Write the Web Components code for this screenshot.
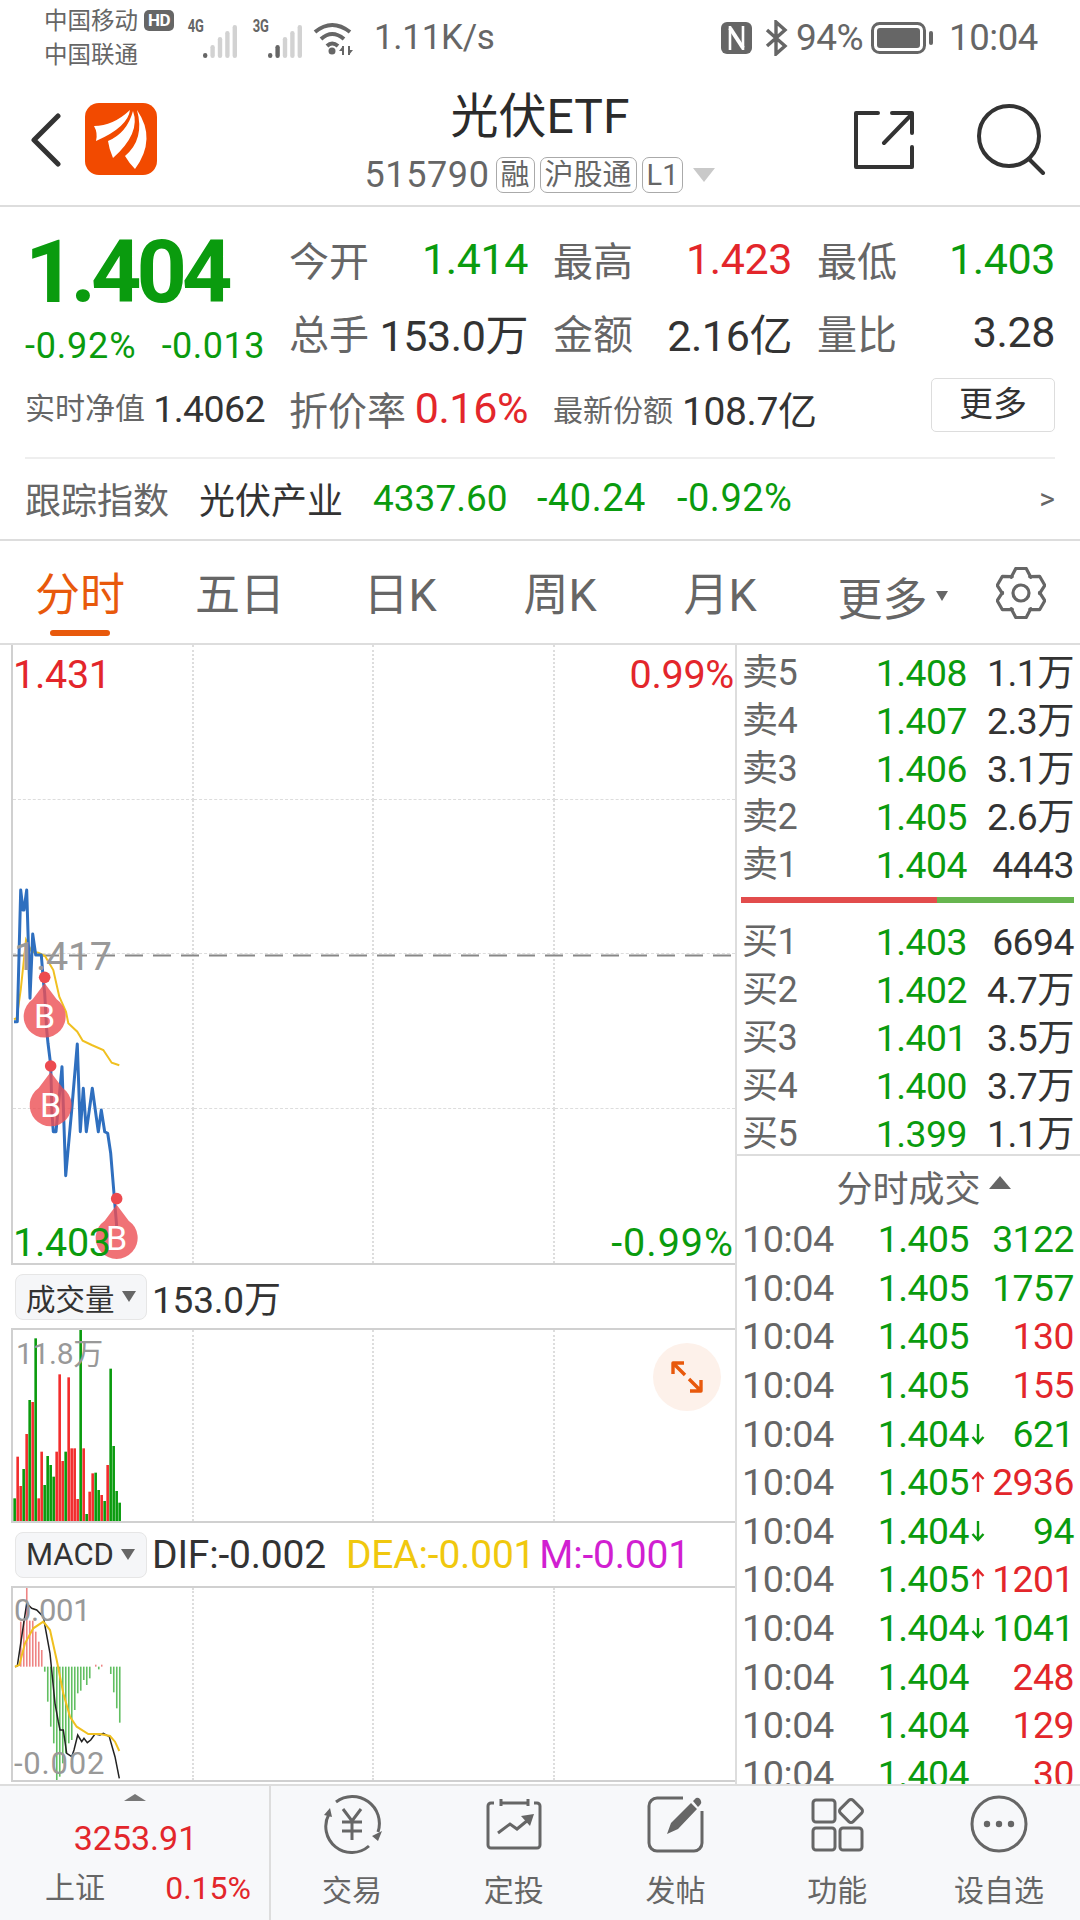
<!DOCTYPE html>
<html lang="zh">
<head>
<meta charset="utf-8">
<title>光伏ETF</title>
<style>
    html, body { margin: 0; padding: 0; background: #fff; }
    body {
        width: 1080px;
        height: 1920px;
        overflow: hidden;
        display: flex;
        flex-direction: column;
        font-family: Roboto, "Noto Sans CJK SC", sans-serif;
        color: #333;
    }
</style>
</head>
<body>
<status-bar></status-bar>
<stock-header></stock-header>
<quote-panel></quote-panel>
<period-tabs></period-tabs>
<market-area>
    <chart-panel></chart-panel>
    <depth-panel></depth-panel>
</market-area>
<nav-bar>
    <index-ticker></index-ticker>
    <nav-item label="交易">
        <svg width="60" height="60" viewBox="0 0 60 60" fill="none" stroke="#666" stroke-width="3">
            <path d="M7 20A26 26 0 0 0 47 52M14 8A27 27 0 0 1 56 38"/>
            <path d="M2 21L8 14L10 23Z M50 42L56 47L60 37Z" fill="#666" stroke="none"/>
            <path d="M21 15L30 27L39 15M30 27V46M20 28H40M20 37H40"/>
        </svg>
    </nav-item>
    <nav-item label="定投">
        <svg width="60" height="60" viewBox="0 0 60 60" fill="none" stroke="#666" stroke-width="3">
            <path d="M10 9H7a3 3 0 0 0-3 3V51a3 3 0 0 0 3 3H53a3 3 0 0 0 3-3V12a3 3 0 0 0-3-3H50M17 5V12M44 5V12M17 9H44"/>
            <path d="M14 39L26 30L33 35L44 26"/>
            <path d="M37 22L50 20L46 32Z" fill="#666" stroke="none"/>
        </svg>
    </nav-item>
    <nav-item label="发帖">
        <svg width="60" height="60" viewBox="0 0 60 60" fill="none" stroke="#666" stroke-width="3">
            <path d="M38 4H12a8 8 0 0 0-8 8V49a8 8 0 0 0 8 8H49a8 8 0 0 0 8-8V17"/>
            <path d="M22 40L26 29L46 9L52 15L33 35Z M48 7L51 4Q53 3 55 5L56 7Q57 9 55 11L53 13Z" fill="#666" stroke="none"/>
        </svg>
    </nav-item>
    <nav-item label="功能">
        <svg width="60" height="60" viewBox="0 0 60 60" fill="none" stroke="#666" stroke-width="3">
            <rect x="6" y="6" width="22" height="22" rx="3"/>
            <rect x="6" y="34" width="22" height="22" rx="3"/>
            <rect x="33" y="34" width="22" height="22" rx="3"/>
            <rect x="35" y="8" width="18" height="18" rx="3" transform="rotate(45 44 17)"/>
        </svg>
    </nav-item>
    <nav-item label="设自选">
        <svg width="60" height="60" viewBox="0 0 60 60" fill="none" stroke="#666" stroke-width="3">
            <circle cx="30" cy="30" r="27"/>
            <g fill="#666" stroke="none"><circle cx="18" cy="30" r="3.2"/><circle cx="30" cy="30" r="3.2"/><circle cx="42" cy="30" r="3.2"/></g>
        </svg>
    </nav-item>
</nav-bar>

<script>
const GREEN = '#0a9b0e';
const RED = '#e3262b';

class StatusBar extends HTMLElement {
    constructor() {
        super();
        const bars = (dark) => [0, 1, 2, 3, 4].map(i => {
            const h = [5, 13, 21, 27, 33][i];
            const fill = i <= dark ? '#666' : '#d2d2d2';
            return `<rect x="${i * 7.4}" y="${34 - h}" width="4.4" height="${h}" rx="2.2" fill="${fill}"/>`;
        }).join('');
        this.attachShadow({ mode: 'open' }).innerHTML = `
            <style>
                :host { display: flex; align-items: center; height: 75px; padding: 0 42px 0 44px; box-sizing: border-box; color: #666; flex: none; }
                .carriers { width: 100px; font-size: 23.5px; line-height: 34px; white-space: nowrap; }
                .hd { width: 30px; height: 21px; margin: -34px 0 0 0; background: #666; color: #fff; border-radius: 5px; font: 700 17px/21px Roboto, sans-serif; text-align: center; letter-spacing: -.5px; }
                .net { font: 700 18px/18px Roboto, sans-serif; transform: scaleX(.72); width: 19px; margin: -24px -1px 0 0; }
                .speed { font-size: 35px; letter-spacing: -.3px; margin-left: 19px; }
                .right { margin-left: auto; display: flex; align-items: center; }
                .pct { font-size: 37px; margin: 0 8px 0 7px; letter-spacing: -.5px; }
                .time { font-size: 36.5px; margin-left: 14px; letter-spacing: -.4px; }
                svg { display: block; }
            </style>
            <div class="carriers">中国移动<br>中国联通</div>
            <div class="hd">HD</div>
            <div class="net" style="margin-left:11px">4G</div>
            <svg width="34" height="34" viewBox="0 0 34 34" style="margin-top:6px">${bars(0)}</svg>
            <div class="net" style="margin-left:13px">3G</div>
            <svg width="34" height="34" viewBox="0 0 34 34" style="margin-top:6px">${bars(1)}</svg>
            <svg width="42" height="34" viewBox="0 0 42 34" fill="none" stroke="#666" stroke-width="4" style="margin-left:11px">
                <path d="M2 11Q19 -3 37 11M8 18Q19 8 31 18M14 25Q19 20 25 25"/>
                <circle cx="19" cy="30" r="3.5" fill="#666" stroke="none"/>
                <path d="M30 25V34M36 25V34" stroke-width="2"/>
                <path d="M26 30L30 25L30 30ZM40 29L36 34L36 29Z" fill="#666" stroke="none"/>
            </svg>
            <div class="speed">1.11K/s</div>
            <div class="right">
                <svg width="31" height="32" viewBox="0 0 31 32">
                    <rect width="31" height="32" rx="6" fill="#666"/>
                    <path d="M9 4V28M22 4V28" stroke="#fff" stroke-width="2.6" fill="none"/>
                    <path d="M9 6L22 26" stroke="#fff" stroke-width="4" fill="none"/>
                </svg>
                <svg width="24" height="36" viewBox="0 0 24 36" fill="none" stroke="#666" stroke-width="3.4" style="margin-left:13px">
                    <path d="M2 10L20 26L11 34V2L20 10L2 26"/>
                </svg>
                <div class="pct">94%</div>
                <svg width="64" height="32" viewBox="0 0 64 32">
                    <rect x="1.5" y="1.5" width="52" height="29" rx="7" fill="none" stroke="#666" stroke-width="3"/>
                    <rect x="6" y="6" width="43" height="20" rx="3" fill="#666"/>
                    <rect x="58" y="9" width="4" height="14" rx="2" fill="#666"/>
                </svg>
                <div class="time">10:04</div>
            </div>`;
    }
}

class StockHeader extends HTMLElement {
    constructor() {
        super();
        this.attachShadow({ mode: 'open' }).innerHTML = `
            <style>
                :host { display: flex; align-items: flex-start; height: 132px; box-sizing: border-box; border-bottom: 2px solid #ddd; padding: 28px 31px 0 31px; flex: none; }
                .logo { margin: 0 0 0 24px; }
                .mid { flex: 1; text-align: center; padding-left: 69px; }
                .name { font-size: 48px; line-height: 50px; margin-top: -11px; color: #2b2b2b; }
                .sub { display: flex; align-items: center; justify-content: center; color: #666; margin-top: 14px; height: 38px; }
                .code { font-size: 36px; letter-spacing: .6px; margin-right: 1px; }
                .tag { border: 1.5px solid #aaa; border-radius: 7px; font-size: 29px; line-height: 34px; padding: 0 4px; margin-left: 5px; color: #666; }
                .tri { width: 0; height: 0; border: 11px solid transparent; border-top: 14px solid #c9c9c9; border-bottom: 0; margin-left: 10px; }
                svg { display: block; }
            </style>
            <svg width="30" height="54" viewBox="0 0 30 54" fill="none" stroke="#333" stroke-width="5" stroke-linecap="round" stroke-linejoin="round" style="margin-top:10px"><path d="M27 3L3 27L27 51"/></svg>
            <svg class="logo" width="72" height="72" viewBox="0 0 72 72">
                <rect width="72" height="72" rx="14" fill="#f24a00"/>
                <path d="M9 23Q28 23 45 7Q43 24 11 38Q13 30 9 23Z" fill="#fff"/>
                <path d="M48 8Q56 30 28 55Q24 46 23 38Q42 30 48 8Z" fill="#fff"/>
                <path d="M52 7Q72 36 50 66Q44 60 40 53Q60 36 52 7Z" fill="#fff"/>
            </svg>
            <div class="mid">
                <div class="name">光伏ETF</div>
                <div class="sub">
                    <span class="code">515790</span><span class="tag">融</span><span class="tag">沪股通</span><span class="tag">L1</span><span class="tri"></span>
                </div>
            </div>
            <svg width="60" height="60" viewBox="0 0 60 60" fill="none" stroke="#333" stroke-width="4" stroke-linecap="round" stroke-linejoin="round" style="margin:6px 0 0 0">
                <path d="M24 4H2V58H58V38M30 34L58 5M38 4H58V24"/>
            </svg>
            <svg width="76" height="72" viewBox="0 0 76 72" fill="none" stroke="#333" stroke-width="4" style="margin:0 0 0 59px">
                <circle cx="36" cy="33" r="30"/><path d="M56 56L70 70" stroke-linecap="round"/>
            </svg>`;
    }
}

class QuotePanel extends HTMLElement {
    constructor() {
        super();
        this.attachShadow({ mode: 'open' }).innerHTML = `
            <style>
                :host { display: block; height: 334px; box-sizing: border-box; border-bottom: 2px solid #ddd; padding: 0 25px; flex: none; font-size: 40px; }
                .top { display: grid; grid-template-columns: 239px 239px 238px; align-content: start; column-gap: 25px; padding-left: 264px; position: relative; height: 250px; box-sizing: border-box; }
                .left { position: absolute; left: 0; top: 0; width: 240px; }
                .big { font-size: 88px; font-weight: 700; letter-spacing: -5px; line-height: 90px; color: ${GREEN}; margin: 20px 0 0 0; height: 92px; }
                .chg { display: flex; justify-content: space-between; font-size: 36px; line-height: 40px; color: ${GREEN}; margin-top: 7px; }
                .nav { display: flex; justify-content: space-between; align-items: center; line-height: 44px; margin-top: 21px; }
                .nav b { font-weight: 400; font-size: 30px; color: #666; }
                .nav span { font-size: 37.5px; letter-spacing: -.6px; }
                .cell { display: flex; justify-content: space-between; align-items: center; height: 60px; margin-top: 13px; }
                .cell:nth-child(-n+4) { margin-top: 22px; }
                .l { color: #666; }
                .v { font-size: 43px; letter-spacing: -.4px; color: #333; }
                .g { color: ${GREEN}; }
                .r { color: ${RED}; }
                .row3 { grid-column: 1 / 4; display: flex; align-items: center; height: 60px; margin-top: 16px; }
                .row3 .small { font-size: 30px; color: #666; }
                .btn { margin: -7px 0 0 auto; width: 124px; height: 54px; box-sizing: border-box; border: 1.5px solid #ddd; border-radius: 5px; font-size: 34px; line-height: 50px; text-align: center; color: #333; }
                .idx { display: flex; align-items: center; border-top: 2px solid #eee; height: 80px; font-size: 36px; margin-top: 0; box-sizing: border-box; }
            </style>
            <div class="top">
                <div class="left">
                    <div class="big">1.404</div>
                    <div class="chg"><span style="letter-spacing:.8px">-0.92%</span><span style="letter-spacing:.5px">-0.013</span></div>
                    <div class="nav"><b>实时净值</b><span>1.4062</span></div>
                </div>
                <div class="cell"><span class="l">今开</span><span class="v g">1.414</span></div>
                <div class="cell"><span class="l">最高</span><span class="v r">1.423</span></div>
                <div class="cell"><span class="l">最低</span><span class="v g">1.403</span></div>
                <div class="cell"><span class="l">总手</span><span class="v">153.0万</span></div>
                <div class="cell"><span class="l">金额</span><span class="v">2.16亿</span></div>
                <div class="cell"><span class="l">量比</span><span class="v">3.28</span></div>
                <div class="row3">
                    <span class="l" style="font-size:39px;width:124px;flex:none">折价率</span><span class="v r" style="width:115px;text-align:right;flex:none">0.16%</span>
                    <span class="small" style="margin-left:25px;width:129px;flex:none">最新份额</span><span class="v" style="font-size:39px">108.7亿</span>
                    <span class="btn">更多</span>
                </div>
            </div>
            <div class="idx">
                <span class="l" style="width:174px">跟踪指数</span>
                <span style="width:174px">光伏产业</span>
                <span class="g" style="width:164px;font-size:37px">4337.60</span>
                <span class="g" style="width:140px;font-size:38px;letter-spacing:.5px">-40.24</span>
                <span class="g" style="font-size:38px;letter-spacing:.5px">-0.92%</span>
                <span class="l" style="margin-left:auto;font-size:30px">&gt;</span>
            </div>`;
    }
}

class PeriodTabs extends HTMLElement {
    constructor() {
        super();
        const names = ['分时', '五日', '日K', '周K', '月K'];
        const gear = [];
        for (let i = 0; i < 6; i++) {
            const a = -90 + i * 60;
            [[-32, 18.5], [-12, 25], [12, 25], [32, 18.5]].forEach(([d, r]) => {
                const t = (a + d) * Math.PI / 180;
                gear.push(`${(25 + r * Math.cos(t)).toFixed(1)},${(26 + r * Math.sin(t)).toFixed(1)}`);
            });
        }
        this.attachShadow({ mode: 'open' }).innerHTML = `
            <style>
                :host { display: flex; height: 102px; flex: none; box-sizing: border-box; position: relative; font-size: 45px; color: #666; }
                .tab { width: 160px; text-align: center; line-height: 110px; flex: none; position: relative; }
                .on { color: #e8590c; }
                .on::after { content: ""; position: absolute; left: 50px; width: 60px; height: 6px; top: 89px; border-radius: 3px; background: #e8590c; }
                .more { display: flex; align-items: center; justify-content: center; width: 161px; height: 110px; flex: none; margin-left: 12px; }
                .tri { width: 0; height: 0; border: 6px solid transparent; border-top: 10px solid #666; border-bottom: 0; margin-left: 8px; }
                svg { margin: 26px 0 0 23px; flex: none; }
            </style>
            ${names.map((n, i) => `<div class="tab${i === 0 ? ' on' : ''}">${n}</div>`).join('')}
            <div class="more"><span>更多</span><span class="tri"></span></div>
            <svg width="50" height="52" viewBox="0 0 50 52" fill="none" stroke="#666" stroke-width="3.2" stroke-linejoin="round">
                <polygon points="${gear.join(' ')}"/>
                <circle cx="25" cy="26" r="8"/>
            </svg>`;
    }
}

class MarketArea extends HTMLElement {
    constructor() {
        super();
        this.attachShadow({ mode: 'open' }).innerHTML = `
            <style>
                :host { display: flex; height: 1141px; flex: none; overflow: hidden; border-top: 2px solid #ddd; box-sizing: border-box; }
            </style>
            <slot></slot>`;
    }
}

class ChartBox extends HTMLElement {
    constructor() {
        super();
        const rows = +(this.getAttribute('rows') || 1);
        const cells = Array(rows * 4).fill(0).map((_, i) => {
            const right = i % 4 < 3 ? 'border-right:2px dotted #ddd;' : '';
            const bottom = i < (rows - 1) * 4 && rows > 1 ? 'border-bottom:1px dashed #ddd;' : '';
            return `<i style="${right}${bottom}"></i>`;
        }).join('');
        this.attachShadow({ mode: 'open' }).innerHTML = `
            <style>
                :host { display: block; position: relative; box-sizing: border-box; border: 2px solid #d0d0d0; border-right: 0; overflow: hidden; flex: none; }
                .grid { position: absolute; inset: 0; display: grid; grid-template-columns: repeat(4, 1fr); grid-template-rows: repeat(${rows}, 1fr); }
            </style>
            <div class="grid">${cells}</div>
            <slot></slot>`;
    }
}

// points are read off the reference at 3x, so x/3 is the page x and y/3 is relative to the crop
const toPts = (arr, cropY, boxTop) => arr.map(([x, y]) => `${(x / 3 - 13).toFixed(1)},${(cropY + y / 3 - boxTop).toFixed(1)}`).join(' ');

class ChartPanel extends HTMLElement {
    constructor() {
        super();
        this.attachShadow({ mode: 'open' }).innerHTML = `
            <style>
                :host { display: flex; flex-direction: column; width: 735px; padding-left: 11px; box-sizing: border-box; flex: none; }
                svg.plot { position: absolute; left: 0; top: 0; }
                .lb { position: absolute; line-height: 40px; height: 40px; font-size: 39.5px; letter-spacing: -.3px; white-space: nowrap; }
                .g { color: ${GREEN}; }
                .r { color: ${RED}; }
                .gray { color: #999; font-size: 31px; }
                .head { display: flex; align-items: center; height: 63px; flex: none; padding-left: 4px; font-size: 39px; letter-spacing: -.2px; }
                .pill { display: flex; align-items: center; box-sizing: border-box; width: 132px; height: 46px; background: #f5f6f8; border: 1.5px solid #e6e6e6; border-radius: 8px; font-size: 29.5px; padding-left: 10px; margin-right: 5px; color: #333; letter-spacing: 0; }
                .pill i { width: 0; height: 0; border: 7px solid transparent; border-top: 11px solid #666; border-bottom: 0; margin-left: 7px; }
                .expand { position: absolute; left: 640px; top: 13px; width: 68px; height: 68px; border-radius: 50%; background: #fdf1ea; }
            </style>
            <chart-box rows="4" style="height:620px;border-top:0">
                <svg class="plot" width="722" height="620">${this.mainPlot()}</svg>
                <div class="lb r" style="left:0;top:10px">1.431</div>
                <div class="lb r" style="right:1px;top:10px">0.99%</div>
                <div class="lb gray" style="left:1px;top:292px;font-size:39.5px">1.417</div>
                <div class="lb g" style="left:0;top:578px">1.403</div>
                <div class="lb g" style="right:1px;top:578px;letter-spacing:1px">-0.99%</div>
            </chart-box>
            <div class="head"><span class="pill">成交量<i></i></span><span style="font-size:37px">153.0万</span></div>
            <chart-box style="height:195px">
                <svg class="plot" width="722" height="195">${this.volPlot()}</svg>
                <div class="lb gray" style="left:3px;top:4px;font-size:30px">11.8万</div>
                <div class="expand">
                    <svg width="68" height="68" viewBox="0 0 68 68" fill="none" stroke="#e8590c" stroke-width="3.4" stroke-linejoin="round">
                        <path d="M20 31V20H31M20 20L32 32M48 37V48H37M48 48L36 36"/>
                    </svg>
                </div>
            </chart-box>
            <div class="head"><span class="pill"><span style="font-size:31px">MACD</span><i></i></span><span>DIF:-0.002</span><span style="color:#f0c80e;margin-left:20px">DEA:-0.001</span><span style="color:#d11fd1;margin-left:4px">M:-0.001</span></div>
            <chart-box style="height:196px">
                <svg class="plot" width="722" height="196">${this.macdPlot()}</svg>
                <div class="lb gray" style="left:1px;top:3px">0.001</div>
                <div class="lb gray" style="left:1px;top:156px;letter-spacing:.8px">-0.002</div>
            </chart-box>`;
    }

    mainPlot() {
        const top = 645;
        const blue = [[42,425],[52,425],[62,30],[69,90],[72,90],[80,30],[90,355],[98,162],[107,225],[124,225],[130,300],[134,340],[140,450],[144,490],[152,555],[156,700],[160,755],[168,755],[186,560],[197,887],[215,690],[232,492],[241,755],[250,625],[259,755],[277,625],[295,755],[304,690],[314,755],[323,760],[332,820],[341,930],[350,1040]];
        const yellow = [[42,418],[50,415],[62,330],[78,180],[95,215],[115,218],[135,228],[160,270],[178,350],[198,395],[205,430],[232,455],[248,482],[275,495],[310,510],[335,548],[358,556]];
        const pins = [[134, 292], [152, 558], [350, 956]].map(([x, y]) => {
            const px = x / 3 - 13, py = 880 + y / 3 - top;
            return `<path d="M${px} ${py + 6}L${px - 12} ${py + 22}A21 21 0 1 0 ${px + 12} ${py + 22}Z" fill="#ec4f54" fill-opacity=".8"/>
                <circle cx="${px}" cy="${py}" r="5.8" fill="#ec4a4f"/>
                <text x="${px}" y="${py + 51}" text-anchor="middle" font-family="Roboto, sans-serif" font-size="34" fill="#fff">B</text>`;
        }).join('');
        return `<path d="M0 ${955.5 - top}H722" stroke="#888" stroke-width="2" stroke-dasharray="18 10"/>
            <polyline points="${toPts(yellow, 880, top)}" fill="none" stroke="#f0c020" stroke-width="2"/>
            <polyline points="${toPts(blue, 880, top)}" fill="none" stroke="#2f6fbf" stroke-width="3" stroke-linejoin="round"/>
            ${pins}`;
    }

    volPlot() {
        const tops = 'g685 r560 r648 g597 r492 g390 r396 g205 r685 r545 g645 g558 g585 g620 r545 r313 r573 g545 r322 r535 r535 r687 g178 r535 g732 r665 r610 g608 g660 r675 g693 r585 g296 g528 g663 g698'.split(' ');
        return tops.map((t, i) => {
            const y = +t.slice(1) / 3 - 60;
            const x = (44 + i * 9) / 3 - 13 - 1.3;
            const c = t[0] === 'g' ? GREEN : '#f22d2d';
            return `<rect x="${x}" y="${y}" width="2.6" height="${191 - y}" fill="${c}"/>`;
        }).join('');
    }

    macdPlot() {
        const top = 1588, zero = 1530 + 410 / 3 - top;
        const red = [[62,275],[71,272],[80,170],[89,272],[98,272],[107,305],[116,335],[125,360]];
        const green = [[134,425],[143,515],[152,590],[161,640],[170,750],[179,740],[188,700],[197,670],[206,640],[215,630],[224,540],[233,490],[242,482],[251,450],[260,465],[269,445],[296,418],[332,432],[341,487],[350,535],[359,578]];
        const bar = ([x, y], c) => {
            const t = 1530 + y / 3 - top;
            return `<rect x="${x / 3 - 13.7}" y="${Math.min(t, zero)}" width="1.6" height="${Math.abs(t - zero)}" fill="${c}"/>`;
        };
        const dif = [[45,410],[52,408],[62,340],[80,220],[95,235],[110,240],[130,260],[150,370],[165,520],[175,575],[180,600],[190,600],[200,670],[215,680],[222,660],[233,615],[245,635],[252,625],[262,638],[272,630],[285,612],[300,615],[310,610],[328,620],[345,680],[358,745]];
        const dea = [[45,410],[58,405],[75,340],[100,295],[130,275],[150,300],[170,390],[190,490],[210,560],[230,590],[265,612],[300,612],[330,618],[345,635],[358,663]];
        return `${red.map(p => bar(p, '#ee8484')).join('')}
            ${green.map(p => bar(p, '#62bf62')).join('')}
            <rect x="82" y="${zero - 2}" width="1.5" height="2" fill="#ee8484"/><rect x="88" y="${zero - 2}" width="1.5" height="2" fill="#ee8484"/>
            <polyline points="${toPts(dif, 1530, top)}" fill="none" stroke="#222" stroke-width="1.5"/>
            <polyline points="${toPts(dea, 1530, top)}" fill="none" stroke="#f0c020" stroke-width="2"/>`;
    }
}

class DepthPanel extends HTMLElement {
    constructor() {
        super();
        const book = (side, list) => list.map(([n, p, v]) => `
            <div class="row"><span class="l">${side}${n}</span><span class="p">${p}</span><span class="v">${v}</span></div>`).join('');
        const sells = [[5, '1.408', '1.1万'], [4, '1.407', '2.3万'], [3, '1.406', '3.1万'], [2, '1.405', '2.6万'], [1, '1.404', '4443']];
        const buys = [[1, '1.403', '6694'], [2, '1.402', '4.7万'], [3, '1.401', '3.5万'], [4, '1.400', '3.7万'], [5, '1.399', '1.1万']];
        const trades = [
            ['1.405', '', '3122', 'g'], ['1.405', '', '1757', 'g'], ['1.405', '', '130', 'r'], ['1.405', '', '155', 'r'],
            ['1.404', 'd', '621', 'g'], ['1.405', 'u', '2936', 'r'], ['1.404', 'd', '94', 'g'], ['1.405', 'u', '1201', 'r'],
            ['1.404', 'd', '1041', 'g'], ['1.404', '', '248', 'r'], ['1.404', '', '129', 'r'], ['1.404', '', '30', 'r']
        ];
        const arrow = (dir) => {
            if (dir === 'd') return `<svg width="14" height="22" viewBox="0 0 14 22" fill="none" stroke="${GREEN}" stroke-width="2.4"><path d="M7 1V20M1.5 14L7 20L12.5 14"/></svg>`;
            if (dir === 'u') return `<svg width="14" height="22" viewBox="0 0 14 22" fill="none" stroke="${RED}" stroke-width="2.4"><path d="M7 21V2M1.5 8L7 2L12.5 8"/></svg>`;
            return '';
        };
        this.attachShadow({ mode: 'open' }).innerHTML = `
            <style>
                :host { display: block; width: 345px; box-sizing: border-box; border-left: 2px solid #ddd; flex: none; font-size: 37.3px; letter-spacing: -.5px; }
                .sell { padding: 4px 0 0 0; height: 252px; box-sizing: border-box; }
                .row { display: grid; grid-template-columns: 118px 107px 1fr; height: 48px; line-height: 48px; padding: 0 6px 0 5px; }
                .l { color: #666; font-size: 36px; letter-spacing: -.4px; }
                .p { color: ${GREEN}; text-align: right; }
                .v { color: #333; text-align: right; }
                .split { display: flex; height: 6px; margin: 0 6px 0 4px; }
                .split b { flex: 0 0 196px; background: #e24c4c; }
                .split i { flex: 1; background: #67b54f; }
                .buy { padding-top: 15px; height: 253px; box-sizing: border-box; border-bottom: 2px solid #ddd; }
                .title { height: 59px; color: #666; font-size: 36px; letter-spacing: 0; display: flex; align-items: center; justify-content: center; padding-left: 30px; }
                .title i { width: 0; height: 0; border: 11px solid transparent; border-bottom: 13px solid #666; border-top: 0; margin: 0 0 6px 8px; }
                .trade { display: grid; grid-template-columns: 112px 115px 18px 1fr; height: 48.6px; line-height: 48px; padding: 0 6px 0 5px; align-items: center; }
                .t { color: #666; font-size: 37.8px; }
                .a { display: flex; justify-content: center; }
                .g { color: ${GREEN}; text-align: right; }
                .r { color: ${RED}; text-align: right; }
            </style>
            <div class="sell">${book('卖', sells)}</div>
            <div class="split"><b></b><i></i></div>
            <div class="buy">${book('买', buys)}</div>
            <div class="title"><span>分时成交</span><i></i></div>
            ${trades.map(([p, a, v, c]) => `
                <div class="trade"><span class="t">10:04</span><span class="p">${p}</span><span class="a">${arrow(a)}</span><span class="${c}">${v}</span></div>`).join('')}`;
    }
}

class NavBar extends HTMLElement {
    constructor() {
        super();
        this.attachShadow({ mode: 'open' }).innerHTML = `
            <style>
                :host { display: flex; height: 136px; flex: none; background: #f7f8fa; border-top: 2px solid #ddd; box-sizing: border-box; }
            </style>
            <slot></slot>`;
    }
}

class IndexTicker extends HTMLElement {
    constructor() {
        super();
        this.attachShadow({ mode: 'open' }).innerHTML = `
            <style>
                :host { display: flex; flex-direction: column; width: 271px; height: 100%; box-sizing: border-box; border-right: 2px solid #ddd; flex: none; padding: 8px 18px 0 45px; }
                .tri { width: 0; height: 0; border: 11px solid transparent; border-bottom: 7px solid #777; border-top: 0; margin: 0 0 0 79px; }
                .val { color: ${RED}; font-size: 34px; line-height: 40px; text-align: center; margin: 17px 0 0 -25px; }
                .line { display: flex; justify-content: space-between; align-items: center; margin-top: 10px; line-height: 40px; }
                .n { color: #666; font-size: 30px; }
                .p { color: ${RED}; font-size: 32px; }
            </style>
            <div class="tri"></div>
            <div class="val">3253.91</div>
            <div class="line"><span class="n">上证</span><span class="p">0.15%</span></div>`;
    }
}

class NavItem extends HTMLElement {
    constructor() {
        super();
        this.attachShadow({ mode: 'open' }).innerHTML = `
            <style>
                :host { display: flex; flex-direction: column; align-items: center; flex: 1; padding-top: 8px; box-sizing: border-box; }
                .label { font-size: 30px; line-height: 40px; color: #666; margin-top: 17px; }
                ::slotted(svg) { display: block; }
            </style>
            <slot></slot>
            <div class="label">${this.getAttribute('label')}</div>`;
    }
}

customElements.define('status-bar', StatusBar);
customElements.define('stock-header', StockHeader);
customElements.define('quote-panel', QuotePanel);
customElements.define('period-tabs', PeriodTabs);
customElements.define('market-area', MarketArea);
customElements.define('chart-box', ChartBox);
customElements.define('chart-panel', ChartPanel);
customElements.define('depth-panel', DepthPanel);
customElements.define('nav-bar', NavBar);
customElements.define('index-ticker', IndexTicker);
customElements.define('nav-item', NavItem);
</script>
</body>
</html>
